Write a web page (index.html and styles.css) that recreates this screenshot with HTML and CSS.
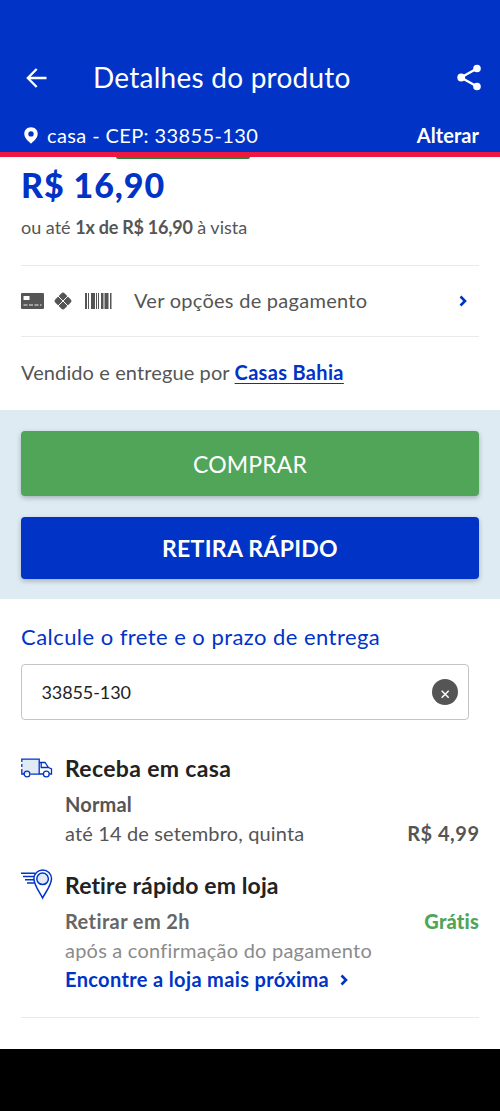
FILE: index.html
```html
<!DOCTYPE html>
<html lang="pt-BR">
<head>
<meta charset="utf-8">
<title>Detalhes do produto</title>
<link rel="stylesheet" href="styles.css">
</head>
<body>
<header class="header">
  <div class="toolbar">
    <svg class="back" width="22" height="20" viewBox="0 0 22 20"><path d="M20.500 10H2M10.700 1 1.800 10l8.900 9"/></svg>
    <h1 class="title">Detalhes do produto</h1>
    <svg class="share" width="24" height="27" viewBox="0 0 24 27"><path d="M20 4.500 4 13.500l16 9"/><circle cx="20" cy="4.500" r="3.800"/><circle cx="4.200" cy="13.500" r="3.900"/><circle cx="20" cy="22.500" r="3.800"/></svg>
  </div>
  <div class="address">
    <svg class="pin" width="14" height="17" viewBox="0 0 14 17"><path fill-rule="evenodd" d="M7 .3C3 .3.3 3.2.3 6.800.3 11 4 14 7 16.700 10 14 13.700 11 13.700 6.800 13.700 3.200 11 .3 7 .3Zm0 3.900a2.700 2.700 0 1 1 0 5.400 2.700 2.700 0 0 1 0-5.400Z"/></svg>
    <span class="place">casa - CEP: 33855-130</span>
    <span class="change">Alterar</span>
  </div>
</header>
<main class="page">
  <section class="offer">
    <div class="tag"></div>
    <div class="price">R$ 16,90</div>
    <div class="installments">ou até <b>1x de R$ 16,90</b> à vista</div>
    <div class="payment">
      <svg class="card" width="23" height="16" viewBox="0 0 23 16"><rect width="23" height="16" rx="1"/><path class="light" d="M2.500 3h6v4h-6z"/><path class="dash" d="M2.500 12h18"/></svg>
      <svg class="pix" width="18" height="18" viewBox="0 0 18 18"><rect x="2.400" y="2.400" width="13.200" height="13.200" rx="2.500" transform="rotate(45 9 9)"/><path d="m4 4 10 10M14 4 4 14"/></svg>
      <svg class="barcode" width="27" height="16" viewBox="0 0 27 16"><path d="M0 0h2v16H0zM3 0h1v16H3zM6 0h4v16H6zM11 0h1v16h-1zM13 0h1v16h-1zM16 0h2.500v16H16zM19.500 0h4v16h-4zM25 0h1.500v16H25z"/></svg>
      <span class="options">Ver opções de pagamento</span>
      <svg class="chevron" width="8" height="12" viewBox="0 0 8 12"><path d="m1.500 1.500 4.500 4.500-4.500 4.500"/></svg>
    </div>
    <div class="seller">Vendido e entregue por <a>Casas Bahia</a></div>
  </section>
  <section class="actions">
    <button class="button buy">COMPRAR</button>
    <button class="button pickup">RETIRA RÁPIDO</button>
  </section>
  <section class="shipping">
    <h2 class="heading">Calcule o frete e o prazo de entrega</h2>
    <div class="field"><span class="zip">33855-130</span>
      <svg class="clear" width="26" height="26" viewBox="0 0 26 26"><circle cx="13" cy="13" r="13"/><path d="m9.700 11.700 7 7m0-7-7 7"/></svg>
    </div>
    <div class="option home">
      <svg class="truck" width="32" height="20" viewBox="0 0 32 20"><path class="fill" d="M1 1h17v15H1z"/><path d="M.8 4V1.100h17.400v15H9.500M.8 6v3M.8 11v5h2.400M18.500 4.500h5.500l3.500 5 3 1.500v5h-2.200M18.500 16h3.800M20.200 4.500v5h7.300"/><circle cx="6" cy="16" r="2.900"/><circle cx="25.300" cy="16" r="2.900"/></svg>
      <div class="details">
        <h3 class="name">Receba em casa</h3>
        <div class="row strong">Normal</div>
        <div class="row date"><span>até 14 de setembro, quinta</span><b class="cost">R$ 4,99</b></div>
      </div>
    </div>
    <div class="option store">
      <svg class="locator" width="32" height="31" viewBox="0 0 32 31"><path d="M21.600 29c-2-4.500-8.700-12.700-8.700-19.300a8.800 8.800 0 0 1 17.600 0c0 6.600-6.900 14.800-8.900 19.300Z"/><circle class="fill" cx="21.600" cy="9.800" r="5.800"/><path d="M0 4.300h14M2 7.500h11M4 10.800h9M6 14h7.500"/></svg>
      <div class="details">
        <h3 class="name">Retire rápido em loja</h3>
        <div class="row strong soft"><span>Retirar em 2h</span><b class="free">Grátis</b></div>
        <div class="row faint">após a confirmação do pagamento</div>
        <div class="row link"><span>Encontre a loja mais próxima</span><svg class="chevron" width="8" height="12" viewBox="0 0 8 12"><path d="m1.500 1.500 4.500 4.500-4.500 4.500"/></svg></div>
      </div>
    </div>
  </section>
</main>
<div class="navbar"></div>
</body>
</html>
```
FILE: styles.css
```css
* { box-sizing: border-box; }
body { margin: 0; background: #fff; font-family: Lato, "Noto Sans", sans-serif; font-size: 20px; line-height: 29px; color: #555; }
h1, h2, h3 { margin: 0; font-weight: 400; }
svg { display: block; flex: none; }

.header { height: 157px; padding: 56px 21px 0 25px; background: #0033c6; border-bottom: 5px solid #ed1941; color: #fff; }
.toolbar { display: flex; align-items: center; height: 43px; }
.back { margin-left: 1px; fill: none; stroke: #fff; stroke-width: 2.3; }
.title { margin-left: 45px; font-size: 28px; letter-spacing: .24px; }
.share { margin-left: auto; margin-right: -2px; fill: #fff; stroke: #fff; stroke-width: 0; }
.share path { fill: none; stroke-width: 2.4; }
.address { display: flex; align-items: center; height: 29px; margin-top: 22px; }
.pin { margin-left: -1px; fill: #fff; }
.place { margin-left: 9px; letter-spacing: .39px; }
.change { margin-left: auto; font-weight: 700; letter-spacing: .05px; }

.offer { height: 253px; padding: 0 21px; }
.tag { width: 134px; height: 2px; margin-left: 95px; background: #298339; border-radius: 0 0 3px 3px; }
.price { height: 50px; padding-top: 5px; line-height: 42px; font-size: 34px; font-weight: 900; letter-spacing: .9px; color: #0033c6; }
.installments { height: 56px; padding-top: 4px; font-size: 18px; }
.installments b { letter-spacing: -.24px; }
.payment { display: flex; align-items: center; height: 72px; border: solid #eaeaea; border-width: 1px 0; }
.card, .pix, .barcode { fill: #555; }
.light { fill: #fff; }
.dash { stroke: #bbb; stroke-width: 1.3; stroke-dasharray: 4 1.5; }
.pix { margin-left: 10px; }
.pix path { stroke: #fff; stroke-width: 1; }
.barcode { margin-left: 13px; }
.options { margin-left: 22px; padding-bottom: 2px; letter-spacing: .27px; }
.chevron { fill: none; stroke: #0033c6; stroke-width: 2.6; }
.payment .chevron { margin: 0 12px 0 auto; }
.seller { padding-top: 21px; letter-spacing: .11px; }
.seller a { color: #0033c6; font-weight: 700; letter-spacing: .33px; text-decoration: underline; text-decoration-thickness: 1px; text-underline-offset: 3px; }

.actions { display: flex; flex-direction: column; gap: 21px; height: 189px; padding: 21px 21px 20px; background: #deebf3; }
.button { flex: none; padding: 0; border: 0; border-radius: 4px; color: #fff; font: 400 23px/30px Lato, sans-serif; box-shadow: 0 2px 5px rgba(0, 0, 0, .25); }
.buy { height: 65px; letter-spacing: .15px; background: #51a559; }
.pickup { height: 62px; letter-spacing: .3px; background: #0033c6; font-weight: 700; }

.shipping { height: 450px; padding: 23px 21px 0; }
.heading { height: 42px; font-size: 22px; letter-spacing: .45px; color: #0033c6; }
.field { display: flex; align-items: center; width: 448px; height: 56px; padding: 0 10px 0 19.5px; border: 1px solid #c4c4c4; border-radius: 4px; color: #222; font-size: 18px; }
.zip { letter-spacing: -.1px; }
.clear { margin-left: auto; fill: #555; }
.clear path { stroke: #fff; stroke-width: 1.5; }
.option { display: flex; gap: 12px; }
.home { margin-top: 34px; }
.truck { margin-top: 4px; }
.truck, .locator { fill: none; stroke: #0033c6; stroke-width: 1.3; }
.fill { fill: #e0ebf5; }
.truck .fill { stroke: none; }
.locator { margin-top: -2px; stroke-width: 1.5; }
.details { flex: 1; }
.name { height: 36px; font-size: 23px; font-weight: 700; letter-spacing: .34px; color: #222; }
.row { display: flex; justify-content: space-between; height: 29px; align-items: center; }
.strong { font-weight: 700; letter-spacing: .15px; }
.date { letter-spacing: .15px; }
.cost { letter-spacing: .5px; margin-right: -.5px; }
.store { height: 147px; margin-top: 23px; border-bottom: 1px solid #eaeaea; }
.store .name { letter-spacing: .12px; }
.soft { color: #666; letter-spacing: .4px; }
.faint { color: #8b8b8b; letter-spacing: .22px; }
.free { color: #51a559; letter-spacing: .2px; }
.link { justify-content: flex-start; gap: 11px; font-weight: 700; letter-spacing: .36px; color: #0033c6; }
.navbar { height: 62px; background: #000; }
```
